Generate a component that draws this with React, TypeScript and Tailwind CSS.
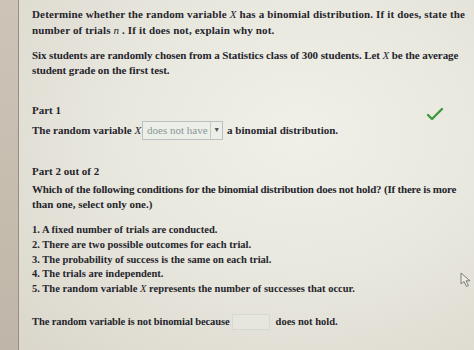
import React from "react";

const serif = { fontFamily: '"Liberation Serif", "Times New Roman", serif' };

function X() {
  return <span className="italic font-normal">X</span>;
}

export default function App() {
  return (
    <div
      className="w-[474px] h-[350px] overflow-hidden flex bg-[#e2e0d7]"
      style={serif}
    >
      <div className="w-[18px] h-full bg-[linear-gradient(180deg,#cdc4b8,#c6bcae_60%,#bfb6a9)]" />
      <div className="w-px h-full bg-[#958e84]" />
      <div className="flex-1 h-full whitespace-nowrap bg-[radial-gradient(ellipse_at_62%_38%,#f0f0e8_0%,#e9e8df_45%,#dad6cb_100%)] text-[#25252c] font-bold text-[11px] pl-[13px] pt-[6px]">
        <div className="leading-[16px] tracking-[0.15px]">
          <div>Determine whether the random variable <X /> has a binomial distribution. If it does, state the</div>
          <div>number of trials <span className="italic font-normal">n</span> . If it does not, explain why not.</div>
        </div>
        <div className="leading-[15px] mt-[10px] tracking-[-0.1px]">
          <div>Six students are randomly chosen from a Statistics class of 300 students. Let <X /> be the average</div>
          <div>student grade on the first test.</div>
        </div>
        <div className="mt-[25px] h-[15px] leading-[15px] flex items-start justify-between pr-[30px]">
          <span>Part 1</span>
          <svg width="18" height="14" viewBox="0 0 18 14" className="mt-[4px] shrink-0">
            <path d="M2 8 L6 12 L16 2" fill="none" stroke="#3c9a3e" strokeWidth="2.4" strokeLinecap="round" strokeLinejoin="round" />
          </svg>
        </div>
        <div className="mt-[3px] flex items-center h-[19px]">
          <span>The random variable <X /></span>
          <div className="ml-[1px] w-[81px] h-[19px] border border-[#b9c2c2] bg-[#eceee8] flex items-center">
            <span className="flex-1 pl-[4px] font-normal text-[#8a9898] text-[11px]">does not have</span>
            <div className="w-[12px] h-full border-l border-[#c3caca] flex items-center justify-center">
              <span className="text-[7px] text-[#555] font-normal">▼</span>
            </div>
          </div>
          <span className="ml-[4px]">a binomial distribution.</span>
        </div>
        <div className="mt-[24px] leading-[15px]">Part 2 out of 2</div>
        <div className="mt-[3px] leading-[15px]">
          <div className="tracking-[-0.2px]">Which of the following conditions for the binomial distribution does not hold? (If there is more</div>
          <div>than one, select only one.)</div>
        </div>
        <div className="mt-[11px] leading-[14.8px] text-[10.5px]">
          <div>1. A fixed number of trials are conducted.</div>
          <div>2. There are two possible outcomes for each trial.</div>
          <div>3. The probability of success is the same on each trial.</div>
          <div>4. The trials are independent.</div>
          <div>5. The random variable <X /> represents the number of successes that occur.</div>
        </div>
        <div className="mt-[17px] flex items-center h-[16px] text-[10.5px]">
          <span className="tracking-[-0.1px]">The random variable is not binomial because</span>
          <div className="ml-[2px] w-[38px] h-[16px] border border-[#d6d8d2] bg-[#e6e6df]" />
          <span className="ml-[6px]">does not hold.</span>
        </div>
      </div>
      <div className="relative">
        <svg width="12" height="16" viewBox="0 0 12 16" className="absolute left-[-14px] top-[272px]">
          <path d="M1 1 L1 12 L4 9.5 L6.5 14.5 L8.5 13.5 L6 8.8 L10 8.8 Z" fill="#ebebe4" stroke="#7d7d7a" strokeWidth="1" strokeLinejoin="round" />
        </svg>
      </div>
    </div>
  );
}
